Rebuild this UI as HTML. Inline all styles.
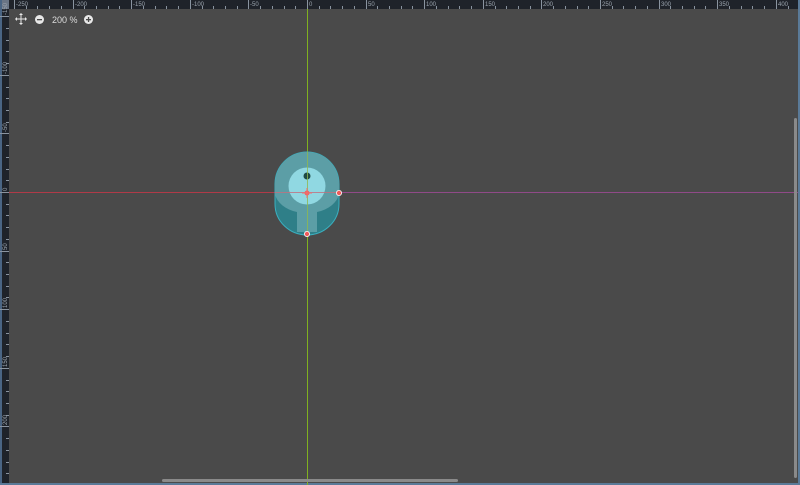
<!DOCTYPE html>
<html><head><style>
body{margin:0;width:800px;height:485px;overflow:hidden;background:#4a4a4a;font-family:"Liberation Sans",sans-serif}
svg{display:block}
</style></head><body>
<svg id="s" width="800" height="485" xmlns="http://www.w3.org/2000/svg">
<rect width="800" height="485" fill="#4a4a4a"/>
<rect x="0" y="0" width="800" height="9" fill="#1f232a"/>
<rect x="0" y="0" width="9" height="485" fill="#1f232a"/>
<rect x="0" y="0" width="9" height="9" fill="#6a7585"/>
<rect x="0" y="0" width="2" height="485" fill="#4a6584"/>
<rect x="798" y="0" width="2" height="485" fill="#5a7a98"/>
<rect x="0" y="483" width="800" height="2" fill="#5a7a98"/>
<g id="ticks" stroke="#8a94a0" stroke-width="1"></g>
<g id="labels" fill="#9aa3ad" font-size="6"></g>
<rect x="307" y="9" width="1" height="476" fill="#80b020"/>
<rect x="9" y="192" width="331" height="1" fill="#b03a48"/>
<rect x="340" y="192" width="458" height="1" fill="#904a88"/>
<path d="M275,184 A32,32 0 0 1 339,184 L339,204 A32,31 0 0 1 275,204 Z" fill="#2f7f88" stroke="#3ab0c0" stroke-width="1"/>
<path d="M275,184 A32,32 0 0 1 339,184 L339,194 A32,22 0 0 1 317,212 L317,232 L297,232 L297,212 A32,22 0 0 1 275,194 Z" fill="#5c9ea6"/>
<circle cx="307" cy="186" r="18.5" fill="#90d8e2"/>
<circle cx="307" cy="176" r="3.5" fill="#1f4a44"/>
<rect x="307" y="152" width="1" height="83" fill="#90b850" opacity="0.8"/>
<rect x="275" y="192" width="64" height="1" fill="#c07080" opacity="0.8"/>
<circle cx="307" cy="193" r="2.5" fill="#f06060"/>
<line x1="302" y1="193" x2="312" y2="193" stroke="#f07070"/>
<line x1="307" y1="188" x2="307" y2="198" stroke="#f07070"/>
<circle cx="339" cy="193" r="2.6" fill="#f05a5a" stroke="#fff" stroke-width="0.8"/>
<circle cx="307" cy="234" r="2.6" fill="#f05a5a" stroke="#fff" stroke-width="0.8"/>
<rect x="162" y="479" width="296" height="3" rx="1.5" fill="#8a8a8a"/>
<rect x="794" y="118" width="3" height="360" rx="1.5" fill="#8a8a8a"/>
<g fill="#e8e8e8" stroke="#e8e8e8">
<line x1="16" y1="19" x2="26" y2="19" stroke-width="1"/>
<line x1="21" y1="14" x2="21" y2="24" stroke-width="1"/>
<path d="M21,13 l-2,2 h4z M21,25 l-2,-2 h4z M15,19 l2,-2 v4z M27,19 l-2,-2 v4z" stroke="none"/>
<circle cx="39.5" cy="19.5" r="4.5" stroke="none"/>
<circle cx="88.5" cy="19.5" r="4.5" stroke="none"/>
</g>
<rect x="37" y="19" width="5" height="1.3" fill="#4a4a4a"/>
<rect x="86" y="19" width="5" height="1.3" fill="#4a4a4a"/>
<rect x="87.9" y="17" width="1.3" height="5" fill="#4a4a4a"/>
<text x="52" y="23" fill="#dcdcdc" font-size="9">200 %</text>
</svg>
<script>
var t=document.getElementById('ticks'),l=document.getElementById('labels'),ns='http://www.w3.org/2000/svg';
function ln(a,b,c,d){var e=document.createElementNS(ns,'line');e.setAttribute('x1',a);e.setAttribute('y1',b);e.setAttribute('x2',c);e.setAttribute('y2',d);t.appendChild(e);}
function tx(x,y,s,r){var e=document.createElementNS(ns,'text');e.setAttribute('x',x);e.setAttribute('y',y);if(r)e.setAttribute('transform','rotate(-90 '+x+' '+y+')');e.textContent=s;l.appendChild(e);}
var px=58.6/50;
for(var v=-260;v<=420;v+=10){var x=Math.round(307+v*px)+0.5;if(x<10||x>798)continue;
 if(v%50==0){ln(x,0,x,9);tx(x+1.5,6,v);}else ln(x,6,x,9);}
for(var v=-160;v<=250;v+=10){var y=Math.round(192+v*px)+0.5;if(y<10||y>483)continue;
 if(v%50==0){ln(0,y,9,y);tx(7,y-1.5,v,1);}else ln(6,y,9,y);}
</script>
</body></html>
